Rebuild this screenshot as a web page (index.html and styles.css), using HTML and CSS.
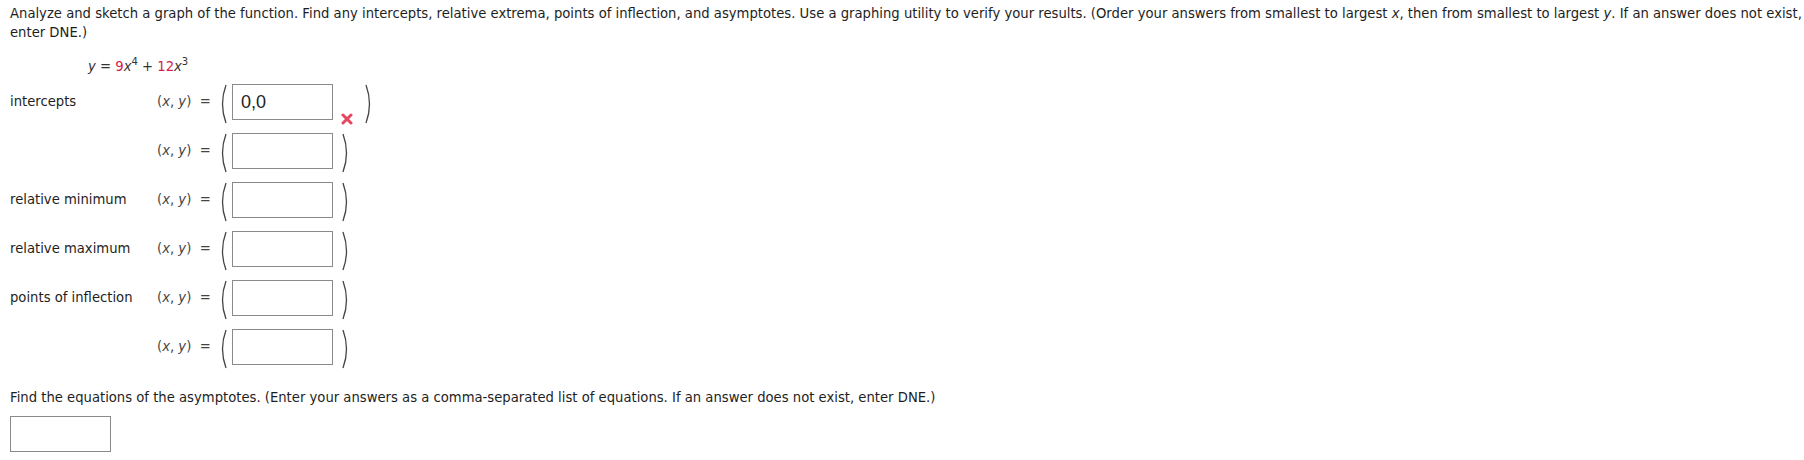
FILE: index.html
```html
<!DOCTYPE html>
<html>
<head>
<meta charset="utf-8">
<link rel="stylesheet" href="styles.css">
</head>
<body>
<div class="page">
  <p class="prompt">Analyze and sketch a graph of the function. Find any intercepts, relative extrema, points of inflection, and asymptotes. Use a graphing utility to verify your results. (Order your answers from smallest to largest <i>x</i>, then from smallest to largest <i>y</i>. If an answer does not exist,<br>enter DNE.)</p>
  <div class="equation"><i>y</i> = <span class="red">9</span><i>x</i><sup>4</sup> + <span class="red">12</span><i>x</i><sup>3</sup></div>

  <div class="rows">
    <div class="row">
      <div class="label">intercepts</div>
      <div class="xy">(<i>x</i>, <i>y</i>)&nbsp; =</div>
      <svg class="paren" viewBox="0 0 10 40" width="10" height="40"><path d="M8 1 Q1 20 8 39" /></svg>
      <input class="box" type="text" value="0,0">
      <svg class="xmark" viewBox="0 0 12 12" width="12" height="12"><path d="M2 2 L10 10 M10 2 L2 10" /></svg>
      <svg class="paren close wide" viewBox="0 0 10 40" width="10" height="40"><path d="M2 1 Q9 20 2 39" /></svg>
    </div>
    <div class="row">
      <div class="label"></div>
      <div class="xy">(<i>x</i>, <i>y</i>)&nbsp; =</div>
      <svg class="paren" viewBox="0 0 10 40" width="10" height="40"><path d="M8 1 Q1 20 8 39" /></svg>
      <input class="box" type="text" value="">
      <svg class="paren close" viewBox="0 0 10 40" width="10" height="40"><path d="M2 1 Q9 20 2 39" /></svg>
    </div>
    <div class="row">
      <div class="label">relative minimum</div>
      <div class="xy">(<i>x</i>, <i>y</i>)&nbsp; =</div>
      <svg class="paren" viewBox="0 0 10 40" width="10" height="40"><path d="M8 1 Q1 20 8 39" /></svg>
      <input class="box" type="text" value="">
      <svg class="paren close" viewBox="0 0 10 40" width="10" height="40"><path d="M2 1 Q9 20 2 39" /></svg>
    </div>
    <div class="row">
      <div class="label">relative maximum</div>
      <div class="xy">(<i>x</i>, <i>y</i>)&nbsp; =</div>
      <svg class="paren" viewBox="0 0 10 40" width="10" height="40"><path d="M8 1 Q1 20 8 39" /></svg>
      <input class="box" type="text" value="">
      <svg class="paren close" viewBox="0 0 10 40" width="10" height="40"><path d="M2 1 Q9 20 2 39" /></svg>
    </div>
    <div class="row">
      <div class="label">points of inflection</div>
      <div class="xy">(<i>x</i>, <i>y</i>)&nbsp; =</div>
      <svg class="paren" viewBox="0 0 10 40" width="10" height="40"><path d="M8 1 Q1 20 8 39" /></svg>
      <input class="box" type="text" value="">
      <svg class="paren close" viewBox="0 0 10 40" width="10" height="40"><path d="M2 1 Q9 20 2 39" /></svg>
    </div>
    <div class="row">
      <div class="label"></div>
      <div class="xy">(<i>x</i>, <i>y</i>)&nbsp; =</div>
      <svg class="paren" viewBox="0 0 10 40" width="10" height="40"><path d="M8 1 Q1 20 8 39" /></svg>
      <input class="box" type="text" value="">
      <svg class="paren close" viewBox="0 0 10 40" width="10" height="40"><path d="M2 1 Q9 20 2 39" /></svg>
    </div>
  </div>

  <p class="prompt2">Find the equations of the asymptotes. (Enter your answers as a comma-separated list of equations. If an answer does not exist, enter DNE.)</p>
  <input class="box asym" type="text" value="">
</div>
</body>
</html>
```

FILE: styles.css
```css
html, body {
  margin: 0;
  padding: 0;
  background: #ffffff;
}
body {
  font-family: "DejaVu Sans", Verdana, sans-serif;
  font-size: 13.2px;
  color: #1e1e1e;
}
.page {
  padding: 4px 0 0 10px;
}
.prompt {
  margin: 0;
  line-height: 19px;
  white-space: nowrap;
}
.equation {
  margin: 15px 0 0 78px;
  height: 20px;
  line-height: 20px;
  color: #333333;
}
.equation sup {
  font-size: 10px;
  line-height: 0;
  vertical-align: 6px;
}
.red {
  color: #d2204a;
}
.rows {
  display: flex;
  flex-direction: column;
  gap: 13px;
  margin-top: 7px;
}
.row {
  display: flex;
  align-items: flex-start;
  height: 36px;
}
.label {
  width: 147px;
  line-height: 36px;
}
.xy {
  width: 61px;
  line-height: 36px;
  color: #444444;
}
.paren {
  display: block;
  flex: none;
}
.paren path, .xmark path {
  fill: none;
}
.paren path {
  stroke: #444444;
  stroke-width: 1.3;
}
.paren {
  margin-right: 4px;
}
.paren.close {
  margin-left: 8px;
  margin-right: 0;
}
.paren.close.wide {
  margin-left: 11px;
}
.box {
  display: block;
  box-sizing: border-box;
  width: 101px;
  height: 36px;
  margin: 0;
  border: 1px solid #8a8a8a;
  background: #ffffff;
  padding: 0 8px;
  font-family: "Liberation Sans", Arial, sans-serif;
  font-size: 18px;
  color: #222222;
  outline: none;
}
.xmark {
  display: block;
  flex: none;
  margin: 29px 0 0 8px;
}
.xmark path {
  stroke: #e4475f;
  stroke-width: 3;
  stroke-linecap: round;
}
.prompt2 {
  margin: 23px 0 0 0;
  line-height: 19px;
}
.asym {
  margin-top: 9px;
}
```
